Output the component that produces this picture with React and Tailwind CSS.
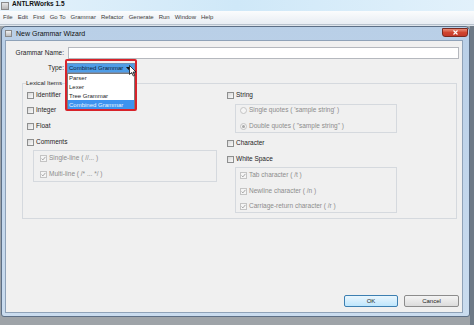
import React from 'react';

const menus = ['File', 'Edit', 'Find', 'Go To', 'Grammar', 'Refactor', 'Generate', 'Run', 'Window', 'Help'];

function Check({ checked, disabled }) {
    return (
        <span
            className={`w-[7px] h-[7px] shrink-0 border flex items-center justify-center ${disabled
                ? 'border-[#c4c4c4] bg-[#f5f5f5]'
                : 'border-[#8e8f8f] bg-gradient-to-br from-[#d8d8d8] to-[#fafafa]'
                }`}
        >
            {checked && (
                <svg width="5" height="5" viewBox="0 0 5 5">
                    <path d="M0.6 2.6 L1.9 3.9 L4.4 0.9" fill="none" stroke="#9c9c9c" strokeWidth="0.9" />
                </svg>
            )}
        </span>
    );
}

function Radio({ selected }) {
    return (
        <span className="w-[7px] h-[7px] shrink-0 rounded-full border border-[#c4c4c4] bg-[#f5f5f5] flex items-center justify-center">
            {selected && <span className="w-[3px] h-[3px] rounded-full bg-[#a8a8a8]" />}
        </span>
    );
}

function Row({ children, label, disabled }) {
    return (
        <div className="h-[10px] flex items-center gap-[2px] whitespace-nowrap">
            {children}
            <span className={disabled ? 'text-[#8c8c8c]' : 'text-[#1e1e1e]'}>{label}</span>
        </div>
    );
}

export default function App() {
    return (
        <div className="w-[474px] h-[325px] overflow-hidden flex flex-col bg-[#9ea3a8] font-['Liberation_Sans',Arial,sans-serif]">
            {/* App title strip */}
            <div className="h-[11px] shrink-0 flex items-center gap-[3px] pl-[1px] bg-gradient-to-r from-[#e4f2fb] via-[#cfe8f8] to-[#e2f1fb]">
                <span className="w-[8px] h-[8px] bg-gradient-to-b from-[#e6e6e6] to-[#b9b9b9] border border-[#8a8a8a]" />
                <span className="text-[6.5px] font-bold leading-[8px] text-[#111] -mt-[3px]">ANTLRWorks 1.5</span>
            </div>

            {/* Menu bar */}
            <div className="h-[14px] shrink-0 flex items-center gap-[5px] pl-[3px] bg-gradient-to-b from-[#fbfcfd] to-[#e8edf3] border-b border-[#b8c2cd] text-[6px] text-[#3b3b3b]">
                {menus.map((m) => (
                    <span key={m}>{m}</span>
                ))}
            </div>
            <div className="h-[1px] shrink-0 bg-[#dfe5ec]" />

            <div className="flex-1 flex">
                {/* Dialog */}
                <div className="ml-[1px] w-[469px] h-[291px] rounded-t-[5px] rounded-b-[3px] border border-[#5d6f86] bg-gradient-to-b from-[#b9cfe7] to-[#cadcef] flex flex-col">
                    <div className="h-[13px] shrink-0 flex items-center justify-between pl-[3px] pr-[1px]">
                        <div className="flex items-center gap-[4px]">
                            <span className="w-[7px] h-[7px] bg-gradient-to-b from-[#f0f0f0] to-[#bcbcbc] border border-[#8a8a8a]" />
                            <span className="text-[7px] leading-[9px] text-[#111]">New Grammar Wizard</span>
                        </div>
                        <div className="w-[26px] h-[9px] -mt-[3px] rounded-b-[3px] border border-[#7a2a20] bg-gradient-to-b from-[#e88b78] via-[#d0452f] to-[#c4392a] flex items-center justify-center">
                            <svg width="5" height="5" viewBox="0 0 5 5">
                                <path d="M0.5 0.5 L4.5 4.5 M4.5 0.5 L0.5 4.5" stroke="#fff" strokeWidth="1.1" />
                            </svg>
                        </div>
                    </div>

                    <div className="ml-[3px] w-[458px] h-[273px] relative border border-[#8fa2b8] bg-[#f0f0f0] flex flex-col text-[6.5px] leading-[8px]">
                        {/* Grammar name */}
                        <div className="mt-[6px] flex items-center gap-[4px]">
                            <span className="w-[58px] text-right text-[#1e1e1e]">Grammar Name:</span>
                            <div className="w-[391px] h-[12px] border border-[#b5b8be] bg-white" />
                        </div>

                        {/* Type */}
                        <div className="mt-[4px] flex items-center gap-[3px]">
                            <span className="w-[58px] text-right text-[#1e1e1e]">Type:</span>
                            <div className="w-[68px] h-[10px] border border-[#6d8fb8] bg-[#4f9de6] flex items-center justify-between pl-[1px] pr-[3px] whitespace-nowrap">
                                <span className="text-[#0e1c33] text-[6px]">Combined Grammar</span>
                                <svg width="5" height="3" viewBox="0 0 5 3">
                                    <path d="M0 0 H5 L2.5 3 Z" fill="#111" />
                                </svg>
                            </div>
                        </div>

                        {/* Lexical items */}
                        <fieldset className="mt-[6px] ml-[16px] w-[435px] border border-[#d5d9de] pl-[4px] pt-[3px] pb-[5px]">
                            <legend className="-ml-[1px] px-0 text-[#1e1e1e] text-[6.2px] leading-[8px]">Lexical Items</legend>
                            <div className="grid grid-cols-[200px_1fr]">
                                <div className="flex flex-col">
                                    <Row label="Identifier"><Check /></Row>
                                    <div className="mt-[5px]"><Row label="Integer"><Check /></Row></div>
                                    <div className="mt-[6px]"><Row label="Float"><Check /></Row></div>
                                    <div className="mt-[6px]"><Row label="Comments"><Check /></Row></div>
                                    <div className="mt-[3px] ml-[6px] w-[184px] border border-[#d5d9de] pl-[6px] pt-[2px] pb-[2px] flex flex-col gap-[6px]">
                                        <Row label="Single-line ( //... )" disabled><Check checked disabled /></Row>
                                        <Row label="Multi-line ( /* ... */ )" disabled><Check checked disabled /></Row>
                                    </div>
                                </div>
                                <div className="flex flex-col">
                                    <Row label="String"><Check /></Row>
                                    <div className="mt-[4px] ml-[8px] w-[162px] border border-[#d5d9de] pl-[4px] pb-[1px] flex flex-col gap-[6px]">
                                        <Row label="Single quotes ( 'sample string' )" disabled><Radio /></Row>
                                        <Row label={'Double quotes ( "sample string" )'} disabled><Radio selected /></Row>
                                    </div>
                                    <div className="mt-[5px]"><Row label="Character"><Check /></Row></div>
                                    <div className="mt-[6px]"><Row label="White Space"><Check /></Row></div>
                                    <div className="mt-[3px] ml-[8px] w-[162px] border border-[#d5d9de] pl-[4px] pt-[2px] pb-[1px] flex flex-col">
                                        <Row label="Tab character ( /t )" disabled><Check checked disabled /></Row>
                                        <div className="mt-[6px]"><Row label="Newline character ( /n )" disabled><Check checked disabled /></Row></div>
                                        <div className="mt-[5px]"><Row label="Carriage-return character ( /r )" disabled><Check checked disabled /></Row></div>
                                    </div>
                                </div>
                            </div>
                        </fieldset>

                        <div className="flex-1" />

                        {/* Buttons */}
                        <div className="flex justify-end gap-[6px] pr-[3px] pb-[5px]">
                            <button className="w-[54px] h-[12px] rounded-[2px] border border-[#3c7fb1] bg-gradient-to-b from-[#eaf6fd] to-[#bee6fd] text-[6px] text-[#222]">OK</button>
                            <button className="w-[55px] h-[12px] rounded-[2px] border border-[#8c8c8c] bg-gradient-to-b from-[#f4f4f4] to-[#dcdcdc] text-[6px] text-[#222]">Cancel</button>
                        </div>

                        {/* Open combo popup, outlined in red */}
                        <div className="absolute left-[61px] top-[32px] w-[68px] h-[37px] border border-[#7a7a7a] bg-white flex flex-col text-[#1e1e1e] text-[6px] whitespace-nowrap">
                            <span className="h-[9px] pl-[1px] flex items-center">Parser</span>
                            <span className="h-[9px] pl-[1px] flex items-center">Lexer</span>
                            <span className="h-[9px] pl-[1px] flex items-center">Tree Grammar</span>
                            <span className="h-[9px] pl-[1px] flex items-center bg-[#3d93f0] text-[#eaf3ff]">Combined Grammar</span>
                        </div>
                        <div className="absolute left-[59px] top-[18px] w-[72px] h-[52px] rounded-[2px] border-2 border-[#d8232a]" />
                        <svg className="absolute left-[123px] top-[24px]" width="8" height="12" viewBox="0 0 8 12">
                            <path d="M0.5 0.5 L0.5 9.5 L2.7 7.5 L4.3 11 L5.6 10.4 L4.1 7 L7 7 Z" fill="#fff" stroke="#111" strokeWidth="0.8" />
                        </svg>
                    </div>
                </div>
                <div className="flex-1 bg-[#6e7a86]" />
            </div>
        </div>
    );
}
